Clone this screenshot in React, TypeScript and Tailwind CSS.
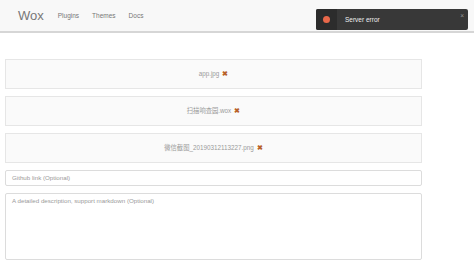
import React from "react";

const files = ["app.jpg", "扫描响查园.wox", "微信截图_20190312113227.png"];

export default function App() {
  return (
    <div
      className="relative w-[474px] h-[260px] overflow-hidden bg-white"
      style={{ fontFamily: '"Liberation Sans", Arial, "Noto Sans CJK SC", sans-serif' }}
    >
      <nav className="h-[33px] bg-[#f8f8f8] border-b-2 border-[#d6d6d6] flex items-center pl-[18px]">
        <span className="text-[13px] leading-none text-[#777] mr-[14px]">Wox</span>
        <span className="text-[6.5px] text-[#777] mr-[13px]">Plugins</span>
        <span className="text-[6.5px] text-[#777] mr-[13px]">Themes</span>
        <span className="text-[6.5px] text-[#777]">Docs</span>
      </nav>

      <div className="absolute left-[316px] top-[9px] w-[152px] h-[21px] flex rounded-[2px] overflow-hidden bg-[#383838]">
        <div className="w-[21px] h-full bg-[#2c2c2c] flex items-center justify-center">
          <div className="w-[7px] h-[7px] rounded-full bg-[#e9684a]" />
        </div>
        <div className="flex-1 flex items-center pl-[8px] text-[6.5px] text-[#eee]">Server error</div>
        <div className="pr-[4px] pt-[4px] text-[6.5px] leading-none text-[#999]">×</div>
      </div>

      <div className="w-[417px] ml-[5px] mt-[26px] flex flex-col gap-[7px]">
        {files.map((f) => (
          <div
            key={f}
            className="h-[30px] bg-[#fafafa] border border-[#e6e6e6] flex items-center justify-center text-[6.3px] text-[#9a9a9a]"
          >
            <span>{f}</span>
            <span className="ml-[3px] font-bold text-[6.5px] text-[#b8622a] leading-none">✖</span>
          </div>
        ))}
        <div className="h-[16px] border border-[#dcdcdc] rounded-[2px] flex items-center pl-[6px] text-[6.2px] text-[#9a9a9a]">
          Github link (Optional)
        </div>
        <div className="h-[67px] border border-[#dcdcdc] rounded-[2px] pl-[6px] pt-[2px] text-[6.2px] text-[#9a9a9a]">
          A detailed description, support markdown (Optional)
        </div>
      </div>
    </div>
  );
}
